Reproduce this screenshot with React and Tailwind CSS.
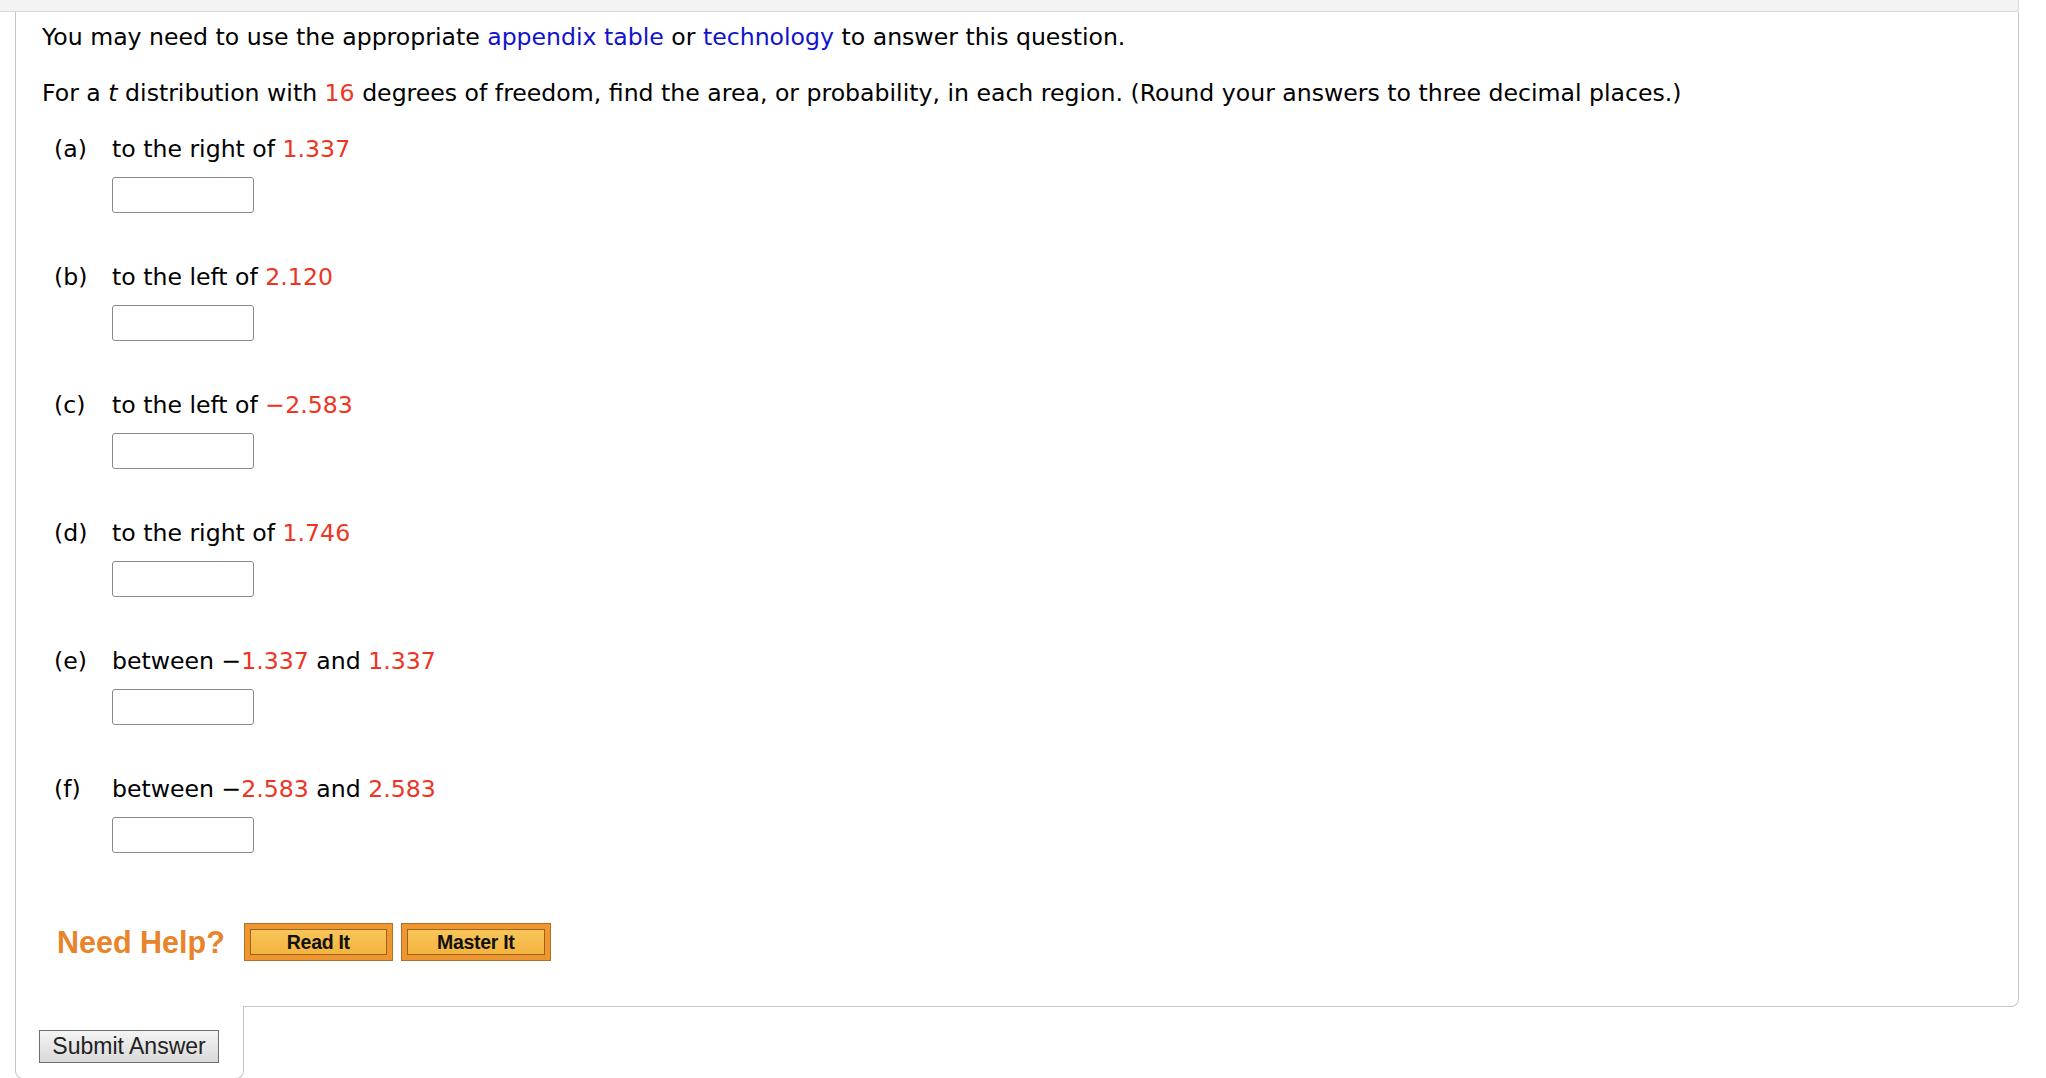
import React from 'react';

const RED = 'text-[#ee3524]';

const parts = [
  { key: 'a', text: <>to the right of <span className={RED}>1.337</span></> },
  { key: 'b', text: <>to the left of <span className={RED}>2.120</span></> },
  { key: 'c', text: <>to the left of <span className={RED}>&minus;2.583</span></> },
  { key: 'd', text: <>to the right of <span className={RED}>1.746</span></> },
  {
    key: 'e',
    text: <>between &minus;<span className={RED}>1.337</span> and <span className={RED}>1.337</span></>,
  },
  {
    key: 'f',
    text: <>between &minus;<span className={RED}>2.583</span> and <span className={RED}>2.583</span></>,
  },
];

function HelpButton({ label, width }) {
  return (
    <button
      className={`${width} h-[38px] border border-[#b0702c] bg-[#f0962f] p-[5px] font-['Liberation_Sans',Arial,sans-serif]`}
    >
      <div className="h-full w-full border border-[#9a6426] bg-gradient-to-b from-[#f8c659] to-[#f3b33f] flex items-center justify-center pt-[2px] text-[19.5px] font-bold text-[#111] leading-none tracking-[-0.3px]">
        {label}
      </div>
    </button>
  );
}

export default function App() {
  return (
    <div className="min-h-screen bg-white font-['DejaVu_Sans',Verdana,sans-serif] text-[23.6px] text-black">
      {/* top strip */}
      <div className="h-[12px] w-[2019px] bg-[#f3f3f3] border-b border-r border-[#d8d8d8] rounded-br-[3px]"></div>

      {/* question card */}
      <div className="ml-[15px] w-[2004px] border-l border-r border-b border-[#c6c6c6] rounded-br-[8px] pl-[26px] pt-[9px] pb-[45px]">
        <p className="leading-[32px]">
          You may need to use the appropriate{' '}
          <a className="text-[#1212cc]">appendix table</a> or{' '}
          <a className="text-[#1212cc]">technology</a> to answer this question.
        </p>
        <p className="leading-[32px] mt-[24px]">
          For a <i>t</i> distribution with <span className={RED}>16</span> degrees of freedom,
          find the area, or probability, in each region. (Round your answers to three decimal
          places.)
        </p>

        <div className="mt-[24px]">
          {parts.map((p) => (
            <div key={p.key} className="h-[128px]">
              <div className="flex leading-[32px] pl-[12px]">
                <span className="w-[58px]">({p.key})</span>
                <span>{p.text}</span>
              </div>
              <input
                type="text"
                className="mt-[12px] ml-[70px] block w-[142px] h-[36px] border border-[#8a8a8a] rounded-[3px] bg-white"
              />
            </div>
          ))}
        </div>

        <div className="flex items-center mt-[22px] pl-[15px]">
          <span className="font-['Liberation_Sans',Arial,sans-serif] font-bold text-[30.5px] text-[#e8842a] mr-[19px] leading-none">
            Need Help?
          </span>
          <HelpButton label="Read It" width="w-[149px]" />
          <div className="w-[8px]"></div>
          <HelpButton label="Master It" width="w-[150px]" />
        </div>
      </div>

      {/* submit tab */}
      <div className="relative -mt-px ml-[15px] w-[229px] h-[73px] bg-white border-l border-r border-b border-[#c6c6c6] rounded-b-[8px] pl-[23px] pt-[23px]">
        <button className="w-[180px] h-[33px] border border-[#6e6e6e] bg-gradient-to-b from-[#f4f4f4] to-[#d9d9d9] font-['Liberation_Sans',Arial,sans-serif] text-[23px] text-[#222] leading-none">
          Submit Answer
        </button>
      </div>
    </div>
  );
}
